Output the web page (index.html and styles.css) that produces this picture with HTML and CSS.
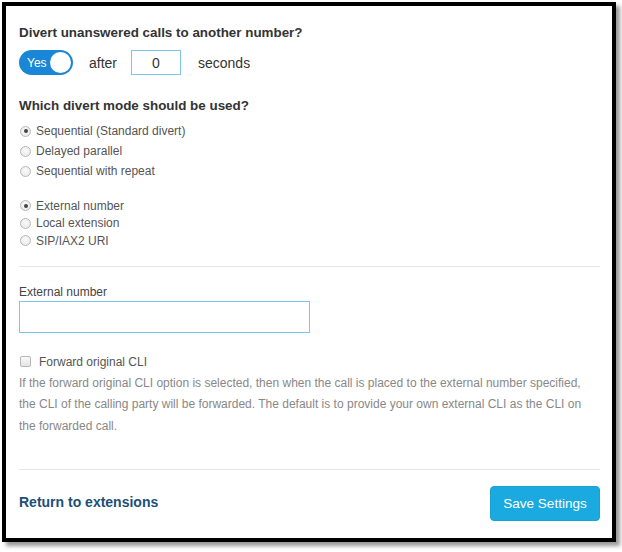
FILE: index.html
```html
<!DOCTYPE html>
<html>
<head>
<meta charset="utf-8">
<link rel="stylesheet" href="styles.css">
</head>
<body>
<div class="frame">
  <h2 class="title">Divert unanswered calls to another number?</h2>
  <div class="delay-row">
    <span class="toggle"><span class="toggle-text">Yes</span><span class="knob"></span></span>
    <span class="word after">after</span>
    <input class="seconds-input" type="text" value="0">
    <span class="word">seconds</span>
  </div>

  <h2 class="title mode-title">Which divert mode should be used?</h2>
  <div class="radio-group group-a">
    <label class="opt"><input type="radio" name="mode" checked><span>Sequential (Standard divert)</span></label>
    <label class="opt"><input type="radio" name="mode"><span>Delayed parallel</span></label>
    <label class="opt"><input type="radio" name="mode"><span>Sequential with repeat</span></label>
  </div>
  <div class="radio-group group-b">
    <label class="opt"><input type="radio" name="dest" checked><span>External number</span></label>
    <label class="opt"><input type="radio" name="dest"><span>Local extension</span></label>
    <label class="opt"><input type="radio" name="dest"><span>SIP/IAX2 URI</span></label>
  </div>

  <hr class="rule rule-1">

  <label class="field-label">External number</label>
  <input class="ext-input" type="text">

  <label class="check"><input type="checkbox"><span>Forward original CLI</span></label>
  <p class="help">If the forward original CLI option is selected, then when the call is placed to the external number specified, the CLI of the calling party will be forwarded. The default is to provide your own external CLI as the CLI on the forwarded call.</p>

  <hr class="rule rule-2">

  <div class="footer">
    <a class="back" href="#">Return to extensions</a>
    <button class="save">Save Settings</button>
  </div>
</div>
</body>
</html>
```
FILE: styles.css
```css
html, body {
  margin: 0;
  padding: 0;
  background: #fff;
}
body {
  font-family: "Liberation Sans", Arial, sans-serif;
  color: #333;
  width: 622px;
  height: 552px;
  overflow: hidden;
}
.frame {
  box-sizing: border-box;
  margin: 2px 0 0 2px;
  width: 614px;
  height: 540px;
  border: 4px solid #000;
  box-shadow: 4px 4px 4px rgba(0,0,0,0.4);
  padding: 19px 12px 0 13px;
  background: #fff;
}
.title {
  margin: 0;
  font-size: 13.4px;
  font-weight: bold;
  line-height: 16px;
  color: #333;
}
.delay-row {
  display: flex;
  align-items: center;
  margin-top: 9px;
  height: 25px;
}
.toggle {
  position: relative;
  display: inline-flex;
  align-items: center;
  width: 54px;
  height: 25px;
  border-radius: 13px;
  background: #1a87d6;
  box-sizing: border-box;
}
.toggle-text {
  color: #fff;
  font-size: 12px;
  margin-left: 8px;
}
.knob {
  position: absolute;
  right: 2px;
  top: 2px;
  width: 21px;
  height: 21px;
  border-radius: 50%;
  background: #fff;
}
.word {
  font-size: 14px;
  color: #333;
}
.after {
  margin-left: 16px;
  margin-right: 14px;
}
.seconds-input {
  box-sizing: border-box;
  width: 50px;
  height: 25px;
  border: 1px solid #7cc6ea;
  text-align: center;
  font-family: inherit;
  font-size: 14px;
  color: #333;
  margin: 0 17px 0 0;
  padding: 0;
  outline: none;
}
.mode-title {
  margin-top: 23px;
}
.radio-group {
  display: flex;
  flex-direction: column;
}
.group-a {
  margin-top: 7px;
}
.group-a .opt {
  height: 20px;
}
.group-b {
  margin-top: 16px;
}
.group-b .opt {
  height: 17.5px;
}
.opt, .check {
  display: flex;
  align-items: center;
  font-size: 12px;
  color: #555;
}
.opt input {
  appearance: none;
  -webkit-appearance: none;
  box-sizing: border-box;
  width: 11px;
  height: 11px;
  margin: 0 5px 0 1px;
  border-radius: 50%;
  border: 1px solid #b8b8b8;
  background: radial-gradient(circle at 50% 40%, #fafafa 0%, #e6e6e6 100%);
  position: relative;
}
.opt input:checked::after {
  content: "";
  position: absolute;
  left: 2.5px;
  top: 2.5px;
  width: 4px;
  height: 4px;
  border-radius: 50%;
  background: #444;
}
.rule {
  border: 0;
  border-top: 1px solid #e6e6e6;
  margin: 0;
}
.rule-1 {
  margin-top: 16px;
}
.field-label {
  display: block;
  font-size: 12px;
  color: #444;
  margin-top: 18px;
  line-height: 14px;
}
.ext-input {
  display: block;
  box-sizing: border-box;
  width: 291px;
  height: 32px;
  border: 1px solid #7cc6ea;
  margin: 2px 0 0 0;
  padding: 0 6px;
  outline: none;
}
.check {
  margin-top: 22px;
  height: 14px;
}
.check input {
  appearance: none;
  -webkit-appearance: none;
  box-sizing: border-box;
  width: 11px;
  height: 11px;
  margin: 0 8px 0 1px;
  border: 1px solid #b8b8b8;
  border-radius: 2px;
  background: linear-gradient(#fafafa, #e4e4e4);
}
.help {
  margin: 4px 0 0 0;
  font-size: 12px;
  line-height: 21.5px;
  color: #888;
  padding-right: 10px;
}
.rule-2 {
  margin-top: 32px;
}
.footer {
  display: flex;
  justify-content: space-between;
  align-items: center;
  margin-top: 16px;
}
.back {
  font-size: 14px;
  font-weight: bold;
  color: #1d4f77;
  text-decoration: none;
  margin-bottom: 3px;
}
.save {
  box-sizing: border-box;
  width: 110px;
  height: 35px;
  border: 1px solid #18a2d4;
  border-radius: 4px;
  background: #1aaadf;
  color: #fff;
  font-family: inherit;
  font-size: 13.5px;
  padding: 0;
}
```
